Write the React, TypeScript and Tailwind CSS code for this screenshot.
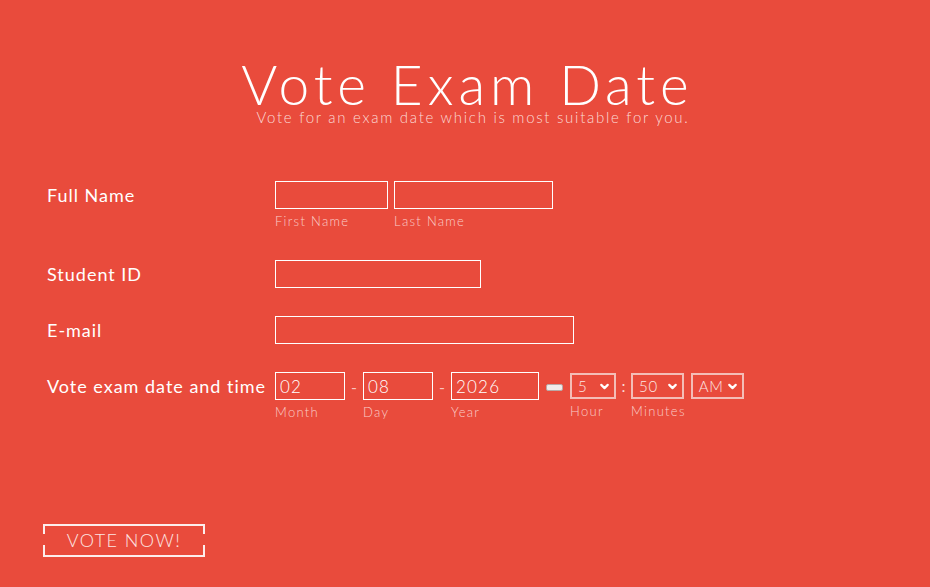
import { ChevronDown } from 'lucide-react'

const font = { fontFamily: '"Lato", "Open Sans", sans-serif' }

function Sel({ value, width }: { value: string; width: string }) {
  return (
    <div
      className={`${width} h-[26px] border-2 border-[#f4bdb7] flex items-center justify-between pl-[6px] pr-[3px] text-[15px] font-light tracking-[0.05em] text-[#fde7e5]`}
    >
      <span>{value}</span>
      <ChevronDown size={13} strokeWidth={4} className="text-white" />
    </div>
  )
}

function Sub({ children, className = '' }: { children: React.ReactNode; className?: string }) {
  return (
    <div className={`mt-[4px] text-[13px] font-light tracking-[0.1em] text-[#f9cdc8] leading-[16px] ${className}`}>
      {children}
    </div>
  )
}

const label = 'w-[228px] pt-[1px] text-[18px] font-normal tracking-[0.055em]'
const box = 'h-[28px] border border-white bg-transparent outline-none'
const dateBox = `${box} px-[4px] text-[17px] font-light tracking-[0.07em]`

export default function App() {
  return (
    <div className="w-[930px] h-[587px] bg-[#e94b3c] text-white overflow-hidden" style={font}>
      <header className="pt-[60px] flex flex-col items-center">
        <h1 className="text-[55px] font-light tracking-[0.09em] leading-[48px] pl-[5px] pb-[2px]">Vote Exam Date</h1>
        <p className="text-[15px] font-light tracking-[0.115em] leading-[14px] text-[#fbd9d5] pl-[16px]">
          Vote for an exam date which is most suitable for you.
        </p>
      </header>

      <form className="pl-[47px] mt-[57px]">
        <div className="flex">
          <label className={label}>Full Name</label>
          <div className="flex gap-[6px]">
            <div>
              <input className={`w-[113px] ${box}`} />
              <Sub>First Name</Sub>
            </div>
            <div>
              <input className={`w-[159px] ${box}`} />
              <Sub>Last Name</Sub>
            </div>
          </div>
        </div>

        <div className="flex mt-[31px]">
          <label className={label}>Student ID</label>
          <input className={`w-[206px] ${box}`} />
        </div>

        <div className="flex mt-[28px]">
          <label className={label}>E-mail</label>
          <input className={`w-[299px] ${box}`} />
        </div>

        <div className="flex mt-[28px]">
          <label className={label}>Vote exam date and time</label>
          <div className="flex items-start">
            <div>
              <input defaultValue="02" className={`w-[70px] ${dateBox}`} />
              <Sub>Month</Sub>
            </div>
            <span className="w-[18px] text-center text-[#f9c4be] pt-[3px]">-</span>
            <div>
              <input defaultValue="08" className={`w-[70px] ${dateBox}`} />
              <Sub>Day</Sub>
            </div>
            <span className="w-[18px] text-center text-[#f9c4be] pt-[3px]">-</span>
            <div>
              <input defaultValue="2026" className={`w-[88px] ${dateBox}`} />
              <Sub>Year</Sub>
            </div>
            <span className="ml-[7px] mr-[7px] mt-[12px] w-[17px] h-[7px] rounded-[2px] bg-[#f1eceb] border border-[#b9a8a6]" />
            <div className="pt-[1px]">
              <Sel value="5" width="w-[46px]" />
              <Sub className="mt-[2px]">Hour</Sub>
            </div>
            <span className="w-[15px] text-center text-[#fbd9d5] pt-[2px]">:</span>
            <div className="pt-[1px]">
              <Sel value="50" width="w-[53px]" />
              <Sub className="mt-[2px]">Minutes</Sub>
            </div>
            <div className="pt-[1px] ml-[5px]">
              <Sel value="AM" width="w-[53px]" />
            </div>
          </div>
        </div>
      </form>

      <div className="pl-[43px] mt-[104px]">
        <button className="relative w-[162px] h-[33px] border-y-2 border-white/90 text-[18px] font-light tracking-[0.08em] text-[#fde5e2]">
          <span className="absolute left-0 top-0 w-[2px] h-[8px] bg-white/90" />
          <span className="absolute left-0 bottom-0 w-[2px] h-[10px] bg-white/90" />
          <span className="absolute right-0 top-0 w-[2px] h-[8px] bg-white/90" />
          <span className="absolute right-0 bottom-0 w-[2px] h-[10px] bg-white/90" />
          VOTE NOW!
        </button>
      </div>
    </div>
  )
}
